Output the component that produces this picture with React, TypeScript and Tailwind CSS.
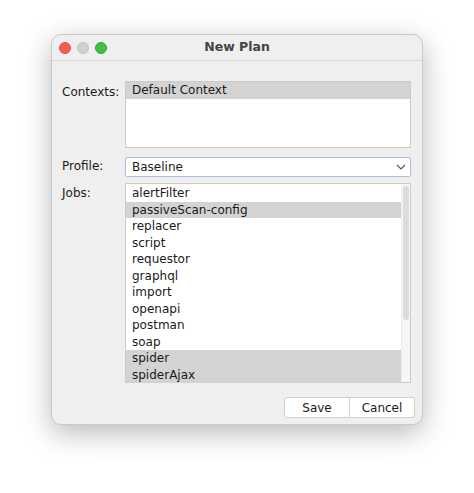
import React from 'react';

const JOBS = [
  'alertFilter',
  'passiveScan-config',
  'replacer',
  'script',
  'requestor',
  'graphql',
  'import',
  'openapi',
  'postman',
  'soap',
  'spider',
  'spiderAjax',
];

const SELECTED = new Set(['passiveScan-config', 'spider', 'spiderAjax']);

export default function App() {
  return (
    <div className="w-[474px] h-[493px] bg-white relative" style={{ fontFamily: '"DejaVu Sans", "Liberation Sans", sans-serif' }}>
      <div className="absolute left-[51px] top-[34px] w-[372px] h-[391px] rounded-[10px] bg-[#efefef] border border-[#c9c9c9] shadow-[0_8px_28px_rgba(0,0,0,0.28)] flex flex-col overflow-hidden">
        {/* title bar */}
        <div className="h-[26px] shrink-0 flex items-center border-b border-[#d9d9d9] relative">
          <div className="flex gap-[6px] pl-[7px]">
            <div className="w-[12px] h-[12px] rounded-full bg-[#f25f58] border border-[#dd4b44]" />
            <div className="w-[12px] h-[12px] rounded-full bg-[#d0d0d0] border border-[#c2c2c2]" />
            <div className="w-[12px] h-[12px] rounded-full bg-[#3ec245] border border-[#2ea735]" />
          </div>
          <div className="absolute inset-0 flex items-center justify-center text-[12.5px] font-bold text-[#444] pointer-events-none">New Plan</div>
        </div>

        {/* content */}
        <div className="flex flex-col pl-[10px] pr-[11px] pt-[20px] text-[12px] text-[#1a1a1a]">
          <div className="flex">
            <div className="w-[63px] pt-[2px]">Contexts:</div>
            <div className="flex-1 h-[67px] bg-white border border-[#cfcac3]">
              <div className="h-[17px] bg-[#d3d3d3] pl-[6px] leading-[17px]">Default Context</div>
            </div>
          </div>

          <div className="flex mt-[9px]">
            <div className="w-[63px] leading-[19px]">Profile:</div>
            <div className="flex-1 h-[20px] bg-white border border-[#a8c0dc] rounded-[2px] flex items-center pl-[6px] pr-[4px]">
              <span className="flex-1">Baseline</span>
              <svg width="10" height="6" viewBox="0 0 10 6" fill="none">
                <path d="M1 1l4 4 4-4" stroke="#555" strokeWidth="1.1" />
              </svg>
            </div>
          </div>

          <div className="flex mt-[6px]">
            <div className="w-[63px] pt-[1px]">Jobs:</div>
            <div className="flex-1 h-[200px] bg-white border border-[#cfcac3] flex">
              <div className="flex-1 flex flex-col pt-[1px]">
                {JOBS.map((j) => (
                  <div
                    key={j}
                    className={`h-[16.5px] leading-[16.5px] pl-[6px] ${SELECTED.has(j) ? 'bg-[#d3d3d3]' : ''}`}
                  >
                    {j}
                  </div>
                ))}
              </div>
              <div className="w-[9px] bg-[#f6f6f6] border-l border-[#ececec] pt-[2px] flex justify-center">
                <div className="w-[6px] h-[134px] rounded-[3px] bg-[#dcdcdc]" />
              </div>
            </div>
          </div>

          <div className="flex justify-end mt-[14px] mr-[-4px]">
            <button className="w-[66px] h-[21px] bg-white border border-[#cfcfcf] rounded-l-[3px] text-[12px] text-[#1a1a1a]">Save</button>
            <button className="w-[65px] h-[21px] bg-white border border-l-0 border-[#cfcfcf] rounded-r-[3px] text-[12px] text-[#1a1a1a]">Cancel</button>
          </div>
        </div>
      </div>
    </div>
  );
}
